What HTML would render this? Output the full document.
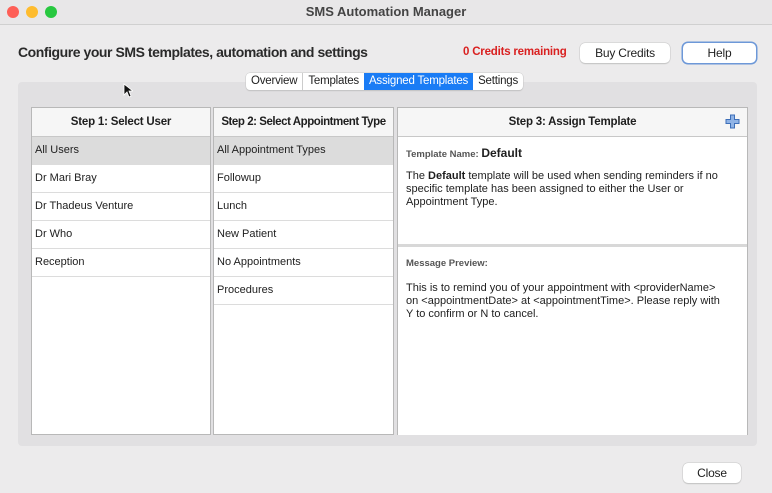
<!DOCTYPE html>
<html><head><style>
*{margin:0;padding:0;box-sizing:border-box}
body{width:772px;height:493px;background:#ecebec;font-family:"Liberation Sans",sans-serif;position:relative;overflow:hidden;color:#1e1e1e}
.abs{position:absolute}
.title{left:0;top:0;width:772px;height:25px;background:#e8e7e8;border-bottom:1px solid #d0d0d0;text-align:center;font-size:13px;font-weight:bold;line-height:24px;color:#444}
.dot{width:12px;height:12px;border-radius:50%;top:6px}
.btn{background:#fff;border-radius:5px;box-shadow:0 0 0 .5px #c8c8c8,0 1px 1px #bbb;font-size:12px;text-align:center;line-height:20px;letter-spacing:-.2px}
.panel{left:18px;top:82px;width:739px;height:364px;background:#e1e0e2;border-radius:4px}
.col{background:#fff;border:1px solid #b8b8b8;top:107px;height:328px}
.hd{height:29px;border-bottom:1px solid #c8c8c8;background:#f6f6f6;font-size:11.5px;font-weight:bold;text-align:center;line-height:28px;letter-spacing:-.2px;white-space:nowrap}
.row{height:28px;border-bottom:1px solid #dcdcdc;font-size:11px;line-height:27px;padding-left:3px}
.sel{background:#dcdcdc}
.tabs{left:246px;top:73px;height:17px;background:#fff;border-radius:4px;box-shadow:0 0 0 .5px #c8c8c8,0 1px 1px #bbb;font-size:11.5px;line-height:17px;display:flex;letter-spacing:-.2px}
.tabs span{padding:0 5px}
.txt{white-space:nowrap}
</style></head><body>
<div class="abs title">SMS Automation Manager</div>
<div class="abs dot" style="left:7px;background:#fe5f57"></div>
<div class="abs dot" style="left:26px;background:#febc2e"></div>
<div class="abs dot" style="left:45px;background:#28c840"></div>
<div class="abs" style="left:18px;top:44px;font-size:14px;font-weight:bold;color:#2a2a2a;letter-spacing:-.45px">Configure your SMS templates, automation and settings</div>
<div class="abs" style="left:463px;top:46px;font-size:11.5px;font-weight:bold;color:#d92020;letter-spacing:-.2px">0 Credits remaining</div>
<div class="abs btn" style="left:580px;top:43px;width:90px;height:20px">Buy Credits</div>
<div class="abs btn" style="left:683px;top:43px;width:73px;height:20px;box-shadow:0 0 0 1.5px #6d98d8,0 1px 1px #bbb">Help</div>
<div class="abs panel"></div>
<div class="abs tabs"><span style="border-right:1px solid #ccc">Overview</span><span>Templates</span><span style="background:#1a7cf5;color:#fff">Assigned Templates</span><span>Settings</span></div>
<div class="abs col" style="left:31px;width:180px">
<div class="hd">Step 1: Select User</div>
<div class="row sel">All Users</div><div class="row">Dr Mari Bray</div><div class="row">Dr Thadeus Venture</div><div class="row">Dr Who</div><div class="row">Reception</div>
</div>
<div class="abs col" style="left:213px;width:181px">
<div class="hd" style="letter-spacing:-.45px">Step 2: Select Appointment Type</div>
<div class="row sel">All Appointment Types</div><div class="row">Followup</div><div class="row">Lunch</div><div class="row">New Patient</div><div class="row">No Appointments</div><div class="row">Procedures</div>
</div>
<div class="abs col" style="left:397px;width:351px;border-bottom:none">
<div class="hd">Step 3: Assign Template</div>
<div style="height:110px;border-bottom:3px solid #d8d8d8;padding:10px 8px;font-size:11px;line-height:13px">
<div><span style="font-size:9.5px;font-weight:bold;color:#555">Template Name: </span><b style="font-size:12px">Default</b></div>
<div class="txt" style="margin-top:9px">The <b>Default</b> template will be used when sending reminders if no<br>specific template has been assigned to either the User or<br>Appointment Type.</div>
</div>
<div style="padding:10px 8px;font-size:11px;line-height:13px">
<div style="font-size:9.5px;font-weight:bold;color:#555">Message Preview:</div>
<div class="txt" style="margin-top:12px">This is to remind you of your appointment with &lt;providerName&gt;<br>on &lt;appointmentDate&gt; at &lt;appointmentTime&gt;. Please reply with<br>Y to confirm or N to cancel.</div>
</div>
</div>
<svg class="abs" style="left:725px;top:114px" width="15" height="15" viewBox="0 0 15 15"><path d="M5.5 1h4v4.5H14v4H9.5V14h-4V9.5H1v-4h4.5z" fill="#8fb3e6" stroke="#3d6fb8" stroke-width="1"/></svg>
<div class="abs btn" style="left:683px;top:463px;width:58px;height:20px">Close</div>
<svg class="abs" style="left:123px;top:83px" width="10" height="15" viewBox="0 0 10 15"><path d="M1 1v11l3-3 2 5 2-1-2-5h4z" fill="#111" stroke="#fff" stroke-width=".8"/></svg>
</body></html>
